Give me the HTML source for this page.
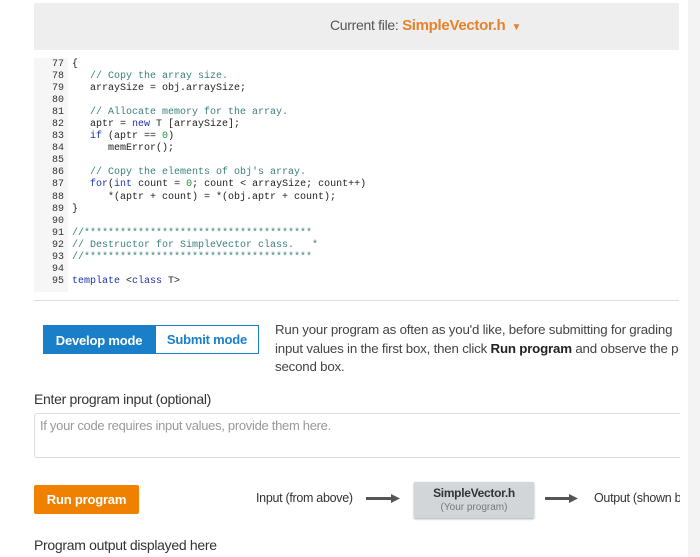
<!DOCTYPE html>
<html><head><style>
body{margin:0;width:700px;height:557px;background:#fff;position:relative;overflow:hidden;font-family:"Liberation Sans",sans-serif;}
.abs{position:absolute;}
.hdr{left:34px;top:3px;width:645px;height:47px;background:#eeeeee;}
.code{left:34px;top:50px;width:645px;height:250px;border-bottom:1px solid #ddd;}
.gut{left:34px;top:58px;width:34px;height:234px;background:#f6f6f6;}
pre{margin:0;font-family:"Liberation Mono",monospace;font-size:10px;line-height:12.05px;color:#222;}
.ln{left:34px;top:59px;width:30px;text-align:right;color:#333;}
.src{left:72px;top:59px;}
.c{color:#3a7f7f}.k{color:#2233aa}.n{color:#1d8f3f}
.btn{font-weight:bold;font-size:13px;text-align:center;line-height:29px;letter-spacing:-0.2px}
</style></head><body>
<div class="abs" style="left:688px;top:0;width:12px;height:557px;background:#f3f3f3"></div>
<div class="abs hdr"></div>
<div class="abs" style="left:330px;top:17px;font-size:14px;color:#555;letter-spacing:-0.3px">Current file: <span style="color:#e8822a;font-size:15px;font-weight:bold">SimpleVector.h</span> <span style="color:#e8822a;font-size:10px">&nbsp;▼</span></div>
<div class="abs code"></div>
<div class="abs gut"></div>
<pre class="abs ln">77
78
79
80
81
82
83
84
85
86
87
88
89
90
91
92
93
94
95</pre>
<pre class="abs src">{
   <span class="c">// Copy the array size.</span>
   arraySize = obj.arraySize;

   <span class="c">// Allocate memory for the array.</span>
   aptr = <span class="k">new</span> T [arraySize];
   <span class="k">if</span> (aptr == <span class="n">0</span>)
      memError();

   <span class="c">// Copy the elements of obj's array.</span>
   <span class="k">for</span>(<span class="k">int</span> count = <span class="n">0</span>; count &lt; arraySize; count++)
      *(aptr + count) = *(obj.aptr + count);
}

<span class="c">//**************************************</span>
<span class="c">// Destructor for SimpleVector class.   *</span>
<span class="c">//**************************************</span>

<span class="k">template</span> &lt;<span class="k">class</span> T&gt;</pre>
<div class="abs btn" style="left:43px;top:325px;width:112px;height:29px;background:#1a7fc9;color:#fff;border:1px solid #1a7fc9;box-sizing:border-box">Develop mode</div>
<div class="abs btn" style="left:155px;top:325px;width:104px;height:29px;border:1px solid #1a7fc9;color:#1a7fc9;box-sizing:border-box;line-height:27px">Submit mode</div>
<div class="abs" style="left:275px;top:321px;width:410px;font-size:13.3px;line-height:18.5px;color:#444;white-space:nowrap;overflow:hidden;letter-spacing:-0.2px">Run your program as often as you'd like, before submitting for grading<br>input values in the first box, then click <b style="color:#222">Run program</b> and observe the p<br>second box.</div>
<div class="abs" style="left:34px;top:391px;font-size:14px;color:#333;letter-spacing:-0.3px">Enter program input (optional)</div>
<div class="abs" style="left:34px;top:413px;width:646px;height:45px;border:1px solid #ddd;border-right:none;box-sizing:border-box;border-radius:3px 0 0 3px"></div>
<div class="abs" style="left:40px;top:418px;font-size:13px;color:#999;letter-spacing:-0.3px">If your code requires input values, provide them here.</div>
<div class="abs btn" style="left:34px;top:485px;width:105px;height:29px;background:#f08000;color:#fff;border-radius:2px">Run program</div>
<div class="abs" style="left:256px;top:491px;font-size:12.5px;color:#333;letter-spacing:-0.3px">Input (from above)</div>
<svg class="abs" style="left:366px;top:494px" width="40" height="10"><rect x="0" y="3" width="26" height="3" fill="#555"/><path d="M25 0 L34 4.5 L25 9Z" fill="#555"/></svg>
<div class="abs" style="left:414px;top:482px;width:120px;height:36px;background:#d3d6d9;text-align:center;box-shadow:0 1px 2px #aaa">
<div style="font-size:12px;font-weight:bold;color:#333;margin-top:4px;letter-spacing:-0.3px">SimpleVector.h</div>
<div style="font-size:10px;color:#777;margin-top:2px">(Your program)</div></div>
<svg class="abs" style="left:545px;top:494px" width="40" height="10"><rect x="0" y="3" width="25" height="3" fill="#555"/><path d="M24 0 L33 4.5 L24 9Z" fill="#555"/></svg>
<div class="abs" style="left:594px;top:491px;font-size:12.5px;color:#333;white-space:nowrap;width:86px;overflow:hidden;letter-spacing:-0.3px">Output (shown below)</div>
<div class="abs" style="left:34px;top:537px;font-size:14px;color:#333;letter-spacing:-0.3px">Program output displayed here</div>
</body></html>
